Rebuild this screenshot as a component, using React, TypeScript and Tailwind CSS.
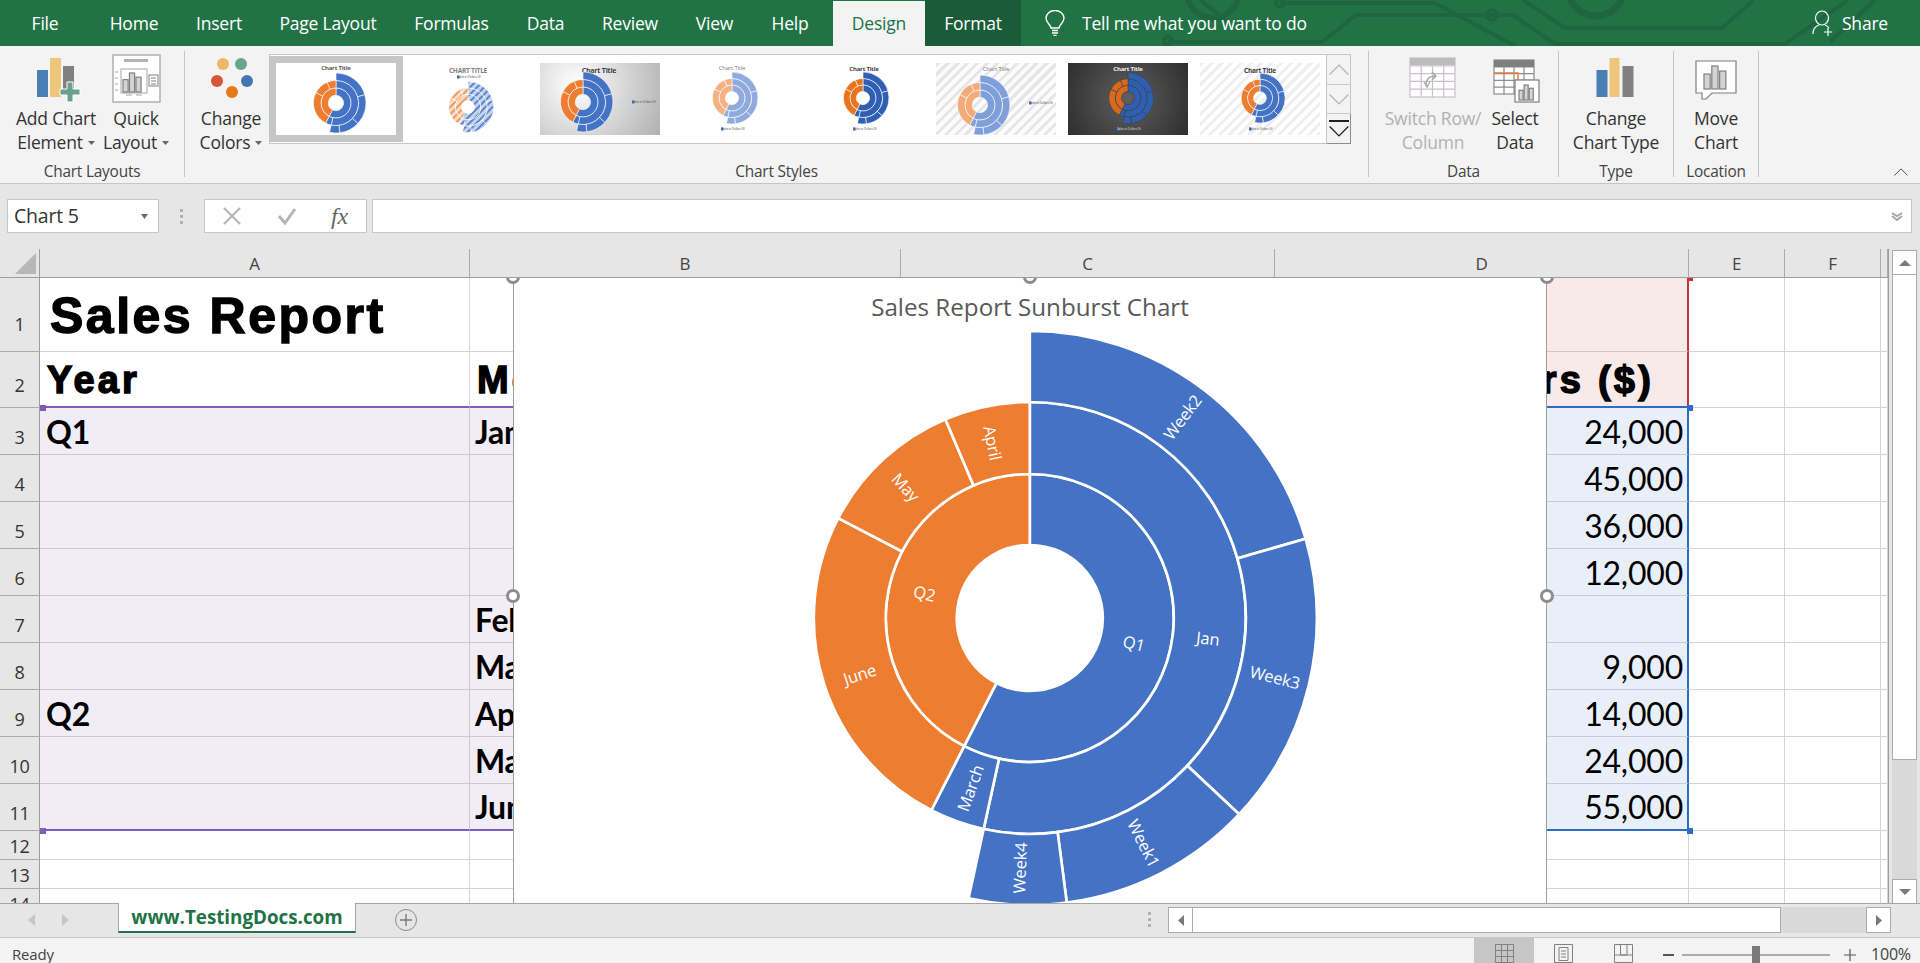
import React from 'react';

const tabs = [
  { name: 'File', w: 'w-[90px]' },
  { name: 'Home', w: 'w-[88px]' },
  { name: 'Insert', w: 'w-[82px]' },
  { name: 'Page Layout', w: 'w-[136px]' },
  { name: 'Formulas', w: 'w-[111px]' },
  { name: 'Data', w: 'w-[77px]' },
  { name: 'Review', w: 'w-[92px]' },
  { name: 'View', w: 'w-[77px]' },
  { name: 'Help', w: 'w-[74px]' },
];

const sector = (cx: number, cy: number, r0: number, r1: number, a0: number, a1: number) => {
  const p = (r: number, a: number) => {
    const t = (a * Math.PI) / 180;
    return `${(cx + r * Math.sin(t)).toFixed(2)} ${(cy - r * Math.cos(t)).toFixed(2)}`;
  };
  const big = a1 - a0 > 180 ? 1 : 0;
  return `M${p(r1, a0)}A${r1} ${r1} 0 ${big} 1 ${p(r1, a1)}L${p(r0, a1)}A${r0} ${r0} 0 ${big} 0 ${p(r0, a0)}Z`;
};

// [ring, start, end, blue?] - angles come from the sales column
const segments: [number, number, number, boolean][] = [
  [0, 0, 207.12, true],
  [1, 0, 192.33, true],
  [1, 192.33, 207.12, true],
  [2, 0, 73.97, true],
  [2, 73.97, 133.15, true],
  [2, 133.15, 172.6, true],
  [2, 172.6, 192.33, true],
  [0, 207.12, 360, false],
  [1, 207.12, 297.53, false],
  [1, 297.53, 336.99, false],
  [1, 336.99, 360, false],
];
const rings = [
  [73, 144],
  [144, 216],
  [216, 287],
];

const Sunburst = ({ cx, cy, k = 1, blue = '#4472c4', orange = '#ed7d31', line = '#ffffff', sw = 2.7 }: {
  cx: number; cy: number; k?: number; blue?: string; orange?: string; line?: string; sw?: number;
}) => (
  <g stroke={line} strokeWidth={sw}>
    {segments.map(([ring, a0, a1, isBlue], i) => (
      <path key={i} d={sector(cx, cy, rings[ring][0] * k, rings[ring][1] * k, a0, a1 - (a1 === 360 ? 0.001 : 0))} fill={isBlue ? blue : orange} />
    ))}
  </g>
);

const chartLabels = [
  { t: 'Week2', x: 1182, y: 417, r: -53 },
  { t: 'Week3', x: 1275, y: 677, r: 13.6 },
  { t: 'Week1', x: 1144, y: 843, r: 62.9 },
  { t: 'Week4', x: 1019.5, y: 868, r: -87.5 },
  { t: 'Jan', x: 1208, y: 638, r: 6 },
  { t: 'Q1', x: 1134, y: 643, r: 13.5 },
  { t: 'March', x: 970, y: 788, r: -70.3 },
  { t: 'June', x: 859.5, y: 674, r: -18 },
  { t: 'May', x: 906, y: 487, r: 47 },
  { t: 'April', x: 993, y: 443, r: 78.5 },
  { t: 'Q2', x: 924.5, y: 593, r: 13.5 },
];

const thumbs = [
  { bg: 'bg-white', cx: 60, cy: 40, R: 30, title: 'Chart Title', tx: 60, ty: 5, tc: '#595959', tw: 700, ts: 6 },
  { bg: 'bg-white', cx: 60, cy: 44, R: 25.5, title: 'CHART TITLE', tx: 60, ty: 7, tc: '#7f7f7f', tw: 700, ts: 6.5, blue: 'url(#hatchBlue)', orange: 'url(#hatchOrange)', legend: [60, 14] },
  { bg: 'bg-[radial-gradient(circle_at_30%_30%,#ffffff,#b0b0b0)]', cx: 43, cy: 39, R: 30, title: 'Chart Title', tx: 59, ty: 7, tc: '#404040', tw: 700, ts: 7, legend: [103, 39] },
  { bg: 'bg-white', cx: 60, cy: 35, R: 26, title: 'Chart Title', tx: 60, ty: 5, tc: '#7f7f7f', tw: 400, ts: 6, blue: '#8faadc', orange: '#f4b183', legend: [60, 66] },
  { bg: 'bg-white', cx: 59, cy: 35, R: 26, title: 'Chart Title', tx: 60, ty: 6, tc: '#404040', tw: 700, ts: 6, blue: '#2f5fb3', orange: '#e9741f', legend: [60, 66] },
  { bg: 'bg-[repeating-linear-gradient(135deg,#e6e6e6_0,#e6e6e6_3px,#fbfbfb_3px,#fbfbfb_7px)]', cx: 44, cy: 42, R: 30, title: 'Chart Title', tx: 60, ty: 6, tc: '#7f7f7f', tw: 400, ts: 6, blue: '#7f9fdb', orange: '#f4ab78', legend: [104, 40] },
  { bg: 'bg-[radial-gradient(circle,#5f5f5f,#2e2e2e)]', cx: 60, cy: 35, R: 25.5, title: 'Chart Title', tx: 60, ty: 6, tc: '#f2f2f2', tw: 700, ts: 6, blue: '#2f5fb3', orange: '#d9691d', line: '#404040', legend: [60, 66], lc: '#d9d9d9' },
  { bg: 'bg-[repeating-linear-gradient(135deg,#efefef_0,#efefef_3px,#ffffff_3px,#ffffff_7px)]', cx: 60, cy: 35, R: 25, title: 'Chart Title', tx: 60, ty: 7, tc: '#404040', tw: 700, ts: 6.5, legend: [60, 66] },
];

const Thumb = ({ d, i }: { d: any; i: number }) => (
  <div className={`w-[120px] h-[72px] shrink-0 ${d.bg} ${i === 0 ? 'outline-[7px] outline-[#c6c6c6]' : ''}`}>
    <svg width="120" height="72" viewBox="0 0 120 72" className="font-['Open_Sans',sans-serif]">
      <defs>
        <pattern id="hatchBlue" width="5" height="5" patternUnits="userSpaceOnUse" patternTransform="rotate(-45)">
          <rect width="5" height="5" fill="#c5d4ee" />
          <rect width="5" height="2" fill="#5f86cb" />
        </pattern>
        <pattern id="hatchOrange" width="5" height="5" patternUnits="userSpaceOnUse" patternTransform="rotate(-45)">
          <rect width="5" height="5" fill="#f9dcc8" />
          <rect width="5" height="2" fill="#ef9a60" />
        </pattern>
      </defs>
      <text x={d.tx} y={d.ty} textAnchor="middle" dominantBaseline="central" fontSize={d.ts} fontWeight={d.tw} fill={d.tc}>{d.title}</text>
      <Sunburst cx={d.cx} cy={d.cy} k={d.R / 287} blue={d.blue} orange={d.orange} line={d.line} sw={0.6} />
      {d.legend && (
        <g>
          <rect x={d.legend[0] - 11} y={d.legend[1] - 1.5} width="2.5" height="3" fill="#4472c4" />
          <text x={d.legend[0] + 1} y={d.legend[1]} textAnchor="middle" dominantBaseline="central" fontSize="3.2" fill={d.lc ?? '#595959'}>Sales in Dollars ($)</text>
        </g>
      )}
    </svg>
  </div>
);

const Caret = ({ c = '#666666' }: { c?: string }) => (
  <svg width="7" height="4" viewBox="0 0 7 4" className="inline-block ml-[5px] mb-[3px]"><path d="M0 0h7L3.5 4z" fill={c} /></svg>
);

const Icon = ({ children }: { children: React.ReactNode }) => (
  <svg width="56" height="55" viewBox="0 0 56 55" className="shrink-0">{children}</svg>
);

const RibbonButton = ({ w, icon, lines, caret, disabled }: {
  w: string; icon: React.ReactNode; lines: string[]; caret?: boolean; disabled?: boolean;
}) => (
  <div className={`${w} shrink-0 flex flex-col items-center text-[17.5px] leading-[24px] whitespace-nowrap ${disabled ? 'text-[#b1b1b1]' : 'text-[#333333]'}`}>
    <Icon>{icon}</Icon>
    <span>{lines[0]}</span>
    <span>{lines[1]}{caret && <Caret />}</span>
  </div>
);

const Group = ({ w, label, children }: { w: string; label: string; children: React.ReactNode }) => (
  <div className={`${w} shrink-0 h-[126px] border-r border-[#c6c6c6] flex flex-col`}>
    <div className="flex flex-1">{children}</div>
    <div className="text-center text-[15.4px] leading-[18px] mb-[-4px] text-[#444444] whitespace-nowrap">{label}</div>
  </div>
);

const Bars = ({ x, y, h }: { x: number; y: number; h: number }) => (
  <g fill="#d4d4d4" stroke="#7f7f7f" strokeWidth="1.2">
    <rect x={x} y={y + h * 0.35} width={h * 0.27} height={h * 0.65} />
    <rect x={x + h * 0.34} y={y} width={h * 0.27} height={h} />
    <rect x={x + h * 0.68} y={y + h * 0.22} width={h * 0.27} height={h * 0.78} />
  </g>
);

const SmallGrid = ({ cols, rows, x, y, w, h, c }: { cols: number; rows: number; x: number; y: number; w: number; h: number; c: string }) => (
  <g stroke={c} strokeWidth="1.2" fill="none">
    <rect x={x} y={y} width={w} height={h} fill="#ffffff" />
    {Array.from({ length: cols - 1 }).map((_, i) => (
      <line key={i} x1={x + ((i + 1) * w) / cols} x2={x + ((i + 1) * w) / cols} y1={y} y2={y + h} />
    ))}
    {Array.from({ length: rows - 1 }).map((_, i) => (
      <line key={i} x1={x} x2={x + w} y1={y + ((i + 1) * h) / rows} y2={y + ((i + 1) * h) / rows} />
    ))}
  </g>
);

const Chevron = ({ up, c, w = 20, h = 11 }: { up?: boolean; c: string; w?: number; h?: number }) => (
  <svg width={w} height={h} viewBox="0 0 18 10" fill="none" stroke={c} strokeWidth="1.2">
    <path d={up ? 'M0.5 9.5L9 1l8.5 8.5' : 'M0.5 0.5L9 9l8.5-8.5'} />
  </svg>
);

const rowsDef = [
  { n: 1, h: 'pb-[15px]' },
  { n: 2, h: 'pb-[10px]' },
  { n: 3, h: 'pb-[5px]' },
  { n: 4, h: 'pb-[5px]' },
  { n: 5, h: 'pb-[5px]' },
  { n: 6, h: 'pb-[5px]' },
  { n: 7, h: 'pb-[5px]' },
  { n: 8, h: 'pb-[5px]' },
  { n: 9, h: 'pb-[5px]' },
  { n: 10, h: 'pb-[5px]' },
  { n: 11, h: 'pb-[5px]' },
  { n: 12, h: 'pb-[1px]' },
  { n: 13, h: 'pb-[1px]' },
  { n: 14, h: 'pb-[1px]' },
];
const cols = ['A', 'B', 'C', 'D', 'E', 'F', ''];

const sheetA: Record<number, string> = { 3: 'Q1', 9: 'Q2' };
const sheetB: Record<number, string> = { 3: 'Jan', 7: 'Feb', 8: 'March', 9: 'April', 10: 'May', 11: 'June' };
const sheetD: Record<number, string> = { 3: '24,000', 4: '45,000', 5: '36,000', 6: '12,000', 8: '9,000', 9: '14,000', 10: '24,000', 11: '55,000' };

const cellClass = (col: string, row: number) => {
  const base = 'flex items-end overflow-visible whitespace-nowrap border-r border-b';
  if ((col === 'A' || col === 'B') && row >= 3 && row <= 11) {
    return `${base} bg-[#f0edf7] border-[#cbc8d2] ${row === 11 ? 'border-b-2 border-b-[#7f5cba]' : ''}`;
  }
  if ((col === 'A' || col === 'B') && row === 2) return `${base} bg-white border-[#d4d4d4] border-b-2 border-b-[#7f5cba]`;
  if (col === 'D' && row <= 2) {
    return `${base} bg-[#f9eaea] border-[#cfc6c6] border-r-2 border-r-[#c8313e] ${row === 2 ? 'border-b-2 border-b-[#2f6bc5]' : ''}`;
  }
  if (col === 'D' && row <= 11) {
    return `${base} bg-[#e8eff9] border-[#c6ccd6] border-r-2 border-r-[#2f6bc5] ${row === 11 ? 'border-b-2 border-b-[#2f6bc5]' : ''}`;
  }
  return `${base} bg-white border-[#d4d4d4]`;
};

const Cell = ({ col, row }: { col: string; row: number }) => {
  const black = "font-['Liberation_Sans',sans-serif] font-bold text-black [-webkit-text-stroke:1.4px_#000]";
  let inner: React.ReactNode = null;
  if (col === 'A' && row === 1) inner = <span className={`${black} text-[50px] leading-[60px] tracking-[2.5px] pl-[10px] pb-[5px]`}>Sales Report</span>;
  if (col === 'A' && row === 2) inner = <span className={`${black} text-[38px] leading-[46px] tracking-[3.2px] pl-[7px] pb-[3px]`}>Year</span>;
  if (col === 'B' && row === 2) inner = <span className={`${black} text-[38px] leading-[46px] tracking-[3.2px] pl-[7px] pb-[3px]`}>Month</span>;
  if (col === 'D' && row === 2) inner = <span className={`${black} text-[38px] leading-[46px] tracking-[3.2px] ml-auto pr-[33px] pb-[3px]`}>Dollars ($)</span>;
  if (col === 'A' && sheetA[row]) inner = <span className="font-['Lato',sans-serif] font-bold text-[32px] leading-[36px] text-black pl-[6px] pb-[4px]">{sheetA[row]}</span>;
  if (col === 'B' && sheetB[row]) inner = <span className="font-['Lato',sans-serif] font-bold text-[32px] leading-[36px] text-black pl-[5px] pb-[4px]">{sheetB[row]}</span>;
  if (col === 'D' && sheetD[row]) inner = <span className="font-['Lato',sans-serif] text-[32px] leading-[36px] text-black ml-auto pr-[4px] pb-[4px]">{sheetD[row]}</span>;
  return <div className={cellClass(col, row)}>{inner}</div>;
};

const Handle = ({ cls }: { cls: string }) => (
  <div className={`absolute w-[14px] h-[14px] rounded-full bg-white border-[3px] border-[#8c8c8c] z-[5] ${cls}`} />
);

export default function App() {
  return (
    <div className="w-[1920px] h-[963px] overflow-hidden flex flex-col bg-[#e6e6e6] font-['Open_Sans',sans-serif] text-[#333333] tracking-[-0.2px]">
      {/* Title bar with tabs */}
      <header className="relative h-[46px] bg-[#217346] flex shrink-0 text-white text-[17.5px]">
        <svg className="absolute inset-0 pointer-events-none" width="1920" height="46" fill="none" stroke="#1f6640" strokeWidth="4">
          <path d="M1168 42H1322L1356 15H1513L1555 44H1785L1848 0" />
          <path d="M1280 3H1435L1515 46" />
          <path d="M1523 0L1565 28H1722L1754 0" />
          <path d="M1830 42L1875 0" />
          <circle cx="1213" cy="-8" r="26" strokeWidth="6" />
          <circle cx="1596" cy="-12" r="28" strokeWidth="7" />
          <path d="M1200 0L1228 22" />
          <circle cx="1492" cy="15" r="5" />
          <circle cx="1280" cy="3" r="4" />
          <circle cx="1168" cy="41" r="4" />
        </svg>
        <nav className="relative flex items-center h-full">
          {tabs.map(t => (
            <div key={t.name} className={`${t.w} text-center`}>{t.name}</div>
          ))}
          <div className="ml-[6px] w-[92px] h-[45px] mt-[1px] bg-[#f3f3f3] text-[#217346] flex items-center justify-center">Design</div>
          <div className="w-[96px] h-full bg-[#1a5c38] flex items-center justify-center">Format</div>
        </nav>
        <div className="relative ml-[24px] flex items-center gap-[17px]">
          <svg width="20" height="26" viewBox="0 0 20 26" fill="none" stroke="#ffffff" strokeWidth="1.4">
            <path d="M6 18c0-3-5-5-5-10a9 7.5 0 0 1 18 0c0 5-5 7-5 10z" />
            <path d="M7 20.5h6M7 23h6M8.5 25.5h3" />
          </svg>
          <span>Tell me what you want to do</span>
        </div>
        <div className="relative ml-auto mr-[32px] flex items-center gap-[8px]">
          <svg width="22" height="26" viewBox="0 0 22 26" fill="none" stroke="#ffffff" strokeWidth="1.2">
            <ellipse cx="10" cy="8" rx="6.5" ry="7" />
            <path d="M1 24c0-5 3-8 6-9M13 15c2 .5 3 1.5 4 3M16 18v8M12 22h8" />
          </svg>
          <span>Share</span>
        </div>
      </header>

      {/* Ribbon */}
      <section className="relative h-[138px] shrink-0 bg-[#f3f3f3] border-b border-[#c6c6c6] pt-[5px] flex">
        <Group w="w-[185px]" label="Chart Layouts">
          <div className="w-[14px]" />
          <RibbonButton w="w-[84px]" lines={['Add Chart', 'Element']} caret icon={
            <g>
              <rect x="9" y="19" width="11" height="27" fill="#4a7fb5" />
              <rect x="22" y="7" width="11" height="39" fill="#efc57e" />
              <rect x="35" y="15" width="11" height="23" fill="#808080" />
              <path d="M39 31h6v7h7v6h-7v7h-6v-7h-7v-6h7z" fill="#6ba08c" stroke="#ffffff" strokeWidth="1" />
            </g>
          } />
          <div className="w-[4px]" />
          <RibbonButton w="w-[68px]" lines={['Quick', 'Layout']} caret icon={
            <g>
              <rect x="5" y="4" width="47" height="47" fill="#ffffff" stroke="#b5b5b5" strokeWidth="1.6" />
              <rect x="16" y="8" width="24" height="3" fill="#b5b5b5" />
              <rect x="13" y="18" width="26" height="24" fill="#ffffff" stroke="#a6a6a6" />
              <Bars x={15} y={22} h={19} />
              <path d="M7 21h3M7 27h3M7 33h3M7 39h3M18 44h6M28 44h6" stroke="#a6a6a6" />
              <rect x="41" y="24" width="9" height="11" fill="#ffffff" stroke="#808080" />
              <path d="M43 27h5M43 30h5M43 33h5" stroke="#808080" />
            </g>
          } />
        </Group>
        <Group w="w-[1184px]" label="Chart Styles">
          <div className="w-[8px]" />
          <RibbonButton w="w-[76px]" lines={['Change', 'Colors']} caret icon={
            <g>
              <circle cx="20" cy="13" r="6" fill="#edb76b" />
              <circle cx="38" cy="13" r="6" fill="#69a68f" />
              <circle cx="14" cy="30" r="6" fill="#d9553a" />
              <circle cx="44" cy="30" r="6" fill="#4178b4" />
              <circle cx="29" cy="41" r="6" fill="#e8781e" />
            </g>
          } />
          <div className="mt-[3px] h-[90px] flex shrink-0">
            <div className="w-[1058px] h-[90px] bg-white border border-[#c6c6c6] flex gap-[12px] pl-[6px] pt-[8px]">
              {thumbs.map((d, i) => <Thumb key={i} d={d} i={i} />)}
            </div>
            <div className="w-[24px] h-[90px] flex flex-col">
              <div className="h-[31px] border border-l-0 border-[#c6c6c6] flex items-center justify-center"><Chevron up c="#b5b5b5" /></div>
              <div className="h-[29px] border border-l-0 border-t-0 border-[#c6c6c6] flex items-center justify-center"><Chevron c="#b5b5b5" /></div>
              <div className="h-[30px] border border-l-0 border-t-0 border-[#8c8c8c] flex flex-col items-center justify-center gap-[4px]">
                <div className="w-[20px] h-[1.5px] bg-[#222222]" />
                <Chevron c="#222222" />
              </div>
            </div>
          </div>
        </Group>
        <Group w="w-[190px]" label="Data">
          <div className="w-[12px]" />
          <RibbonButton w="w-[104px]" lines={['Switch Row/', 'Column']} disabled icon={
            <g>
              <SmallGrid cols={4} rows={5} x={5} y={7} w={45} h={39} c="#c9c0c9" />
              <rect x="5" y="7" width="45" height="7" fill="#bcbcbc" />
              <path d="M21 35c0-7 4-10 9-10M27 21l4 4-4 4M19 31l3 5 3-5" fill="none" stroke="#a6a6a6" strokeWidth="1.4" />
            </g>
          } />
          <RibbonButton w="w-[60px]" lines={['Select', 'Data']} icon={
            <g>
              <SmallGrid cols={4} rows={5} x={7} y={9} w={40} h={34} c="#8c8c8c" />
              <rect x="7" y="9" width="40" height="7" fill="#7f7f7f" />
              <path d="M7 22h24v18" fill="none" stroke="#e07b39" strokeWidth="1.4" />
              <rect x="28" y="29" width="24" height="22" fill="#ffffff" stroke="#7f7f7f" strokeWidth="1.2" />
              <Bars x={32} y={34} h={15} />
            </g>
          } />
        </Group>
        <Group w="w-[115px]" label="Type">
          <div className="w-full flex justify-center">
            <RibbonButton w="w-full" lines={['Change', 'Chart Type']} icon={
              <g>
                <rect x="8.5" y="19" width="11" height="27" fill="#4a7fb5" />
                <rect x="21.5" y="7" width="10" height="39" fill="#efc57e" />
                <rect x="34.5" y="15" width="11" height="31" fill="#808080" />
              </g>
            } />
          </div>
        </Group>
        <Group w="w-[85px]" label="Location">
          <RibbonButton w="w-full" lines={['Move', 'Chart']} icon={
            <g>
              <path d="M8 10h40v32H24l-6 6H14v-6H8z" fill="#ffffff" stroke="#7f7f7f" strokeWidth="1.2" />
              <Bars x={16} y={15} h={23} />
            </g>
          } />
        </Group>
        <div className="ml-auto mr-[12px] mt-[117px]"><Chevron up c="#444444" w={14} h={8} /></div>
      </section>

      {/* Formula bar */}
      <section className="h-[65px] shrink-0 flex pt-[15px] pl-[7px]">
        <div className="w-[152px] h-[34px] bg-white border border-[#c6c6c6] flex items-center justify-between px-[6px] text-[19.5px]">
          <span>Chart 5</span>
          <svg width="7" height="5" viewBox="0 0 7 5" className="mr-[4px]"><path d="M0 0h7L3.5 5z" fill="#6a6a6a" /></svg>
        </div>
        <div className="w-[45px] h-[34px] flex flex-col items-center justify-center gap-[3px]">
          <div className="w-[3px] h-[3px] bg-[#b1b1b1]" />
          <div className="w-[3px] h-[3px] bg-[#b1b1b1]" />
          <div className="w-[3px] h-[3px] bg-[#b1b1b1]" />
        </div>
        <div className="w-[163px] h-[34px] bg-white border border-[#c6c6c6] flex items-center">
          <svg width="18" height="18" viewBox="0 0 18 18" className="ml-[18px]" stroke="#b5b5b5" strokeWidth="2.2"><path d="M1 1l16 16M17 1L1 17" /></svg>
          <svg width="20" height="18" viewBox="0 0 20 18" className="ml-[36px]" fill="none" stroke="#b5b5b5" strokeWidth="3"><path d="M2 9l6 7L18 2" /></svg>
          <span className="ml-[34px] font-['Liberation_Serif',serif] italic text-[24px] text-[#666666] leading-none">fx</span>
        </div>
        <div className="ml-[5px] w-[1540px] h-[34px] bg-white border border-[#c6c6c6] flex items-center justify-end pr-[8px]">
          <svg width="12" height="9" viewBox="0 0 12 9" fill="none" stroke="#a6a6a6" strokeWidth="2"><path d="M1 1l5 3 5-3M1 4l5 4 5-4" /></svg>
        </div>
      </section>

      {/* Sheet */}
      <section className="h-[654px] shrink-0 flex">
        <div className="relative w-[1889px] h-[654px] overflow-hidden border-r border-[#9d9d9d] grid grid-cols-[40px_430px_431px_374px_414px_96px_96px_7px] grid-rows-[29px_74px_56px_repeat(9,47px)_29px_29px_29px]">
          <div className="relative z-10 bg-[#e6e6e6] border-r border-b border-[#9d9d9d] flex items-end justify-end p-[3px]">
            <svg width="21" height="21" viewBox="0 0 21 21"><path d="M21 0v21H0z" fill="#b7b7b7" /></svg>
          </div>
          {cols.map((c, i) => (
            <div key={i} className="relative z-10 bg-[#e6e6e6] border-r border-r-[#ababab] border-b border-b-[#9d9d9d] flex items-center justify-center text-[17px] text-[#444444] pt-[2px]">{c}</div>
          ))}
          {rowsDef.map(r => (
            <React.Fragment key={r.n}>
              <div className={`bg-[#e6e6e6] border-r border-r-[#9d9d9d] border-b border-b-[#ababab] flex items-end justify-center text-[18px] leading-[24px] text-[#333333] ${r.h}`}>{r.n}</div>
              {cols.map((c, i) => <Cell key={i} col={c} row={r.n} />)}
            </React.Fragment>
          ))}

          {/* range corners */}
          <div className="absolute left-[40px] top-[156px] w-[6px] h-[6px] bg-[#7f5cba]" />
          <div className="absolute left-[40px] top-[579px] w-[6px] h-[6px] bg-[#7f5cba]" />
          <div className="absolute left-[1687px] top-[29px] w-[6px] h-[3px] bg-[#c8313e]" />
          <div className="absolute left-[1687px] top-[156px] w-[6px] h-[6px] bg-[#2f6bc5]" />
          <div className="absolute left-[1687px] top-[579px] w-[6px] h-[6px] bg-[#2f6bc5]" />

          {/* embedded chart floats over the cells */}
          <div className="absolute left-[513px] top-[28px] w-[1034px] h-[638px] bg-white border border-[#9d9d9d]">
            <div className="text-center text-[24.2px] leading-[32px] mt-[13px] text-[#595959] tracking-normal">Sales Report Sunburst Chart</div>
            <svg className="absolute left-[-1px] top-[-1px] font-['Open_Sans',sans-serif]" width="1034" height="638" viewBox="0 0 1034 638">
              <Sunburst cx={516.8} cy={341} />
              {chartLabels.map(l => (
                <text key={l.t} x={l.x - 513} y={l.y - 277} textAnchor="middle" dominantBaseline="central" fontSize="16.5" fill="#ffffff" transform={`rotate(${l.r} ${l.x - 513} ${l.y - 277})`}>{l.t}</text>
              ))}
            </svg>
          </div>
          <Handle cls="left-[506px] top-[21px]" />
          <Handle cls="left-[1023px] top-[21px]" />
          <Handle cls="left-[1540px] top-[21px]" />
          <Handle cls="left-[506px] top-[340px]" />
          <Handle cls="left-[1540px] top-[340px]" />
        </div>

        {/* Vertical scrollbar */}
        <div className="ml-[3px] w-[25px] flex flex-col h-[655px]">
          <div className="h-[25px] mt-[1px] bg-white border border-[#ababab] flex items-center justify-center">
            <svg width="12" height="6" viewBox="0 0 12 6"><path d="M6 0l6 6H0z" fill="#7a7a7a" /></svg>
          </div>
          <div className="h-[485px] bg-white border-x border-b border-[#ababab]" />
          <div className="flex-1 bg-[#d9d9d9]" />
          <div className="h-[25px] bg-white border border-[#ababab] flex items-center justify-center">
            <svg width="12" height="6" viewBox="0 0 12 6"><path d="M6 6l6-6H0z" fill="#7a7a7a" /></svg>
          </div>
        </div>
      </section>

      {/* Sheet tabs and horizontal scrollbar */}
      <section className="h-[34px] shrink-0 border-t border-[#a6a6a6] border-b-0 flex">
        <div className="w-[118px] flex items-center pl-[28px] gap-[27px] pb-[1px]">
          <svg width="7" height="12" viewBox="0 0 7 12"><path d="M7 0v12L0 6z" fill="#c6c6c6" /></svg>
          <svg width="7" height="12" viewBox="0 0 7 12"><path d="M0 0v12l7-6z" fill="#c6c6c6" /></svg>
        </div>
        <div className="w-[238px] h-[30px] -mt-[1px] bg-white border-x border-[#a6a6a6] border-b-2 border-b-[#217346] flex items-center justify-center text-[#217346] font-bold text-[18.8px] tracking-normal">www.TestingDocs.com</div>
        <div className="ml-[39px] mt-[5px] w-[22px] h-[22px] rounded-full border border-[#8c8c8c] flex items-center justify-center">
          <svg width="12" height="12" viewBox="0 0 12 12" stroke="#7a7a7a" strokeWidth="1.4"><path d="M6 0v12M0 6h12" /></svg>
        </div>
        <div className="ml-auto flex mr-[29px]">
          <div className="w-[18px] flex flex-col items-center justify-center gap-[3px] mr-[10px] pb-[2px]">
            <div className="w-[3px] h-[3px] bg-[#b1b1b1]" />
            <div className="w-[3px] h-[3px] bg-[#b1b1b1]" />
            <div className="w-[3px] h-[3px] bg-[#b1b1b1]" />
          </div>
          <div className="mt-[3px] flex h-[26px]">
            <div className="w-[25px] bg-white border border-[#ababab] flex items-center justify-center">
              <svg width="6" height="11" viewBox="0 0 6 11"><path d="M6 0v11L0 5.5z" fill="#7a7a7a" /></svg>
            </div>
            <div className="w-[588px] bg-white border-y border-r border-[#ababab]" />
            <div className="w-[85px] bg-[#d9d9d9] border-y border-[#d9d9d9]" />
            <div className="w-[25px] bg-white border border-[#ababab] flex items-center justify-center">
              <svg width="6" height="11" viewBox="0 0 6 11"><path d="M0 0v11l6-5.5z" fill="#7a7a7a" /></svg>
            </div>
          </div>
        </div>
      </section>

      {/* Status bar */}
      <footer className="h-[26px] shrink-0 bg-[#f3f3f3] border-t border-[#c6c6c6] flex overflow-hidden text-[15px] text-[#444444]">
        <div className="pl-[12px] pt-[6px] leading-[20px]">Ready</div>
        <div className="ml-auto flex h-full">
          <div className="w-[60px] h-full bg-[#c6c6c6] flex justify-center pt-[6px]">
            <svg width="19" height="19" viewBox="0 0 19 19" fill="none" stroke="#808080" strokeWidth="1"><path d="M.5.5h18v18H.5zM6.5 0v19M12.5 0v19M0 6.5h19M0 12.5h19" /></svg>
          </div>
          <div className="w-[59px] flex justify-center pt-[6px]">
            <svg width="19" height="19" viewBox="0 0 19 19" fill="none" stroke="#808080" strokeWidth="1"><path d="M.5.5h18v18H.5zM5 3.5h9v13H5zM7 7h5M7 10h5M7 13h5" /></svg>
          </div>
          <div className="w-[60px] flex justify-center pt-[6px]">
            <svg width="19" height="19" viewBox="0 0 19 19" fill="none" stroke="#808080" strokeWidth="1"><path d="M.5.5h18v18H.5zM6.5 0v11H13V0M0 11h19" /></svg>
          </div>
          <div className="w-[21px] flex justify-end items-center pt-[9px]"><div className="w-[11px] h-[1.5px] bg-[#555555]" /></div>
          <div className="ml-[8px] w-[148px] relative flex items-center pt-[9px]">
            <div className="w-full h-[2px] bg-[#ababab]" />
            <div className="absolute left-[70px] top-[8px] w-[8px] h-[18px] bg-[#7a7a7a]" />
          </div>
          <div className="w-[26px] flex justify-end items-center pt-[9px]">
            <svg width="12" height="12" viewBox="0 0 12 12" stroke="#555555" strokeWidth="1.2"><path d="M6 0v12M0 6h12" /></svg>
          </div>
          <div className="w-[64px] pl-[15px] pt-[6px] leading-[20px] whitespace-nowrap text-[16px]">100%</div>
        </div>
      </footer>
    </div>
  );
}
